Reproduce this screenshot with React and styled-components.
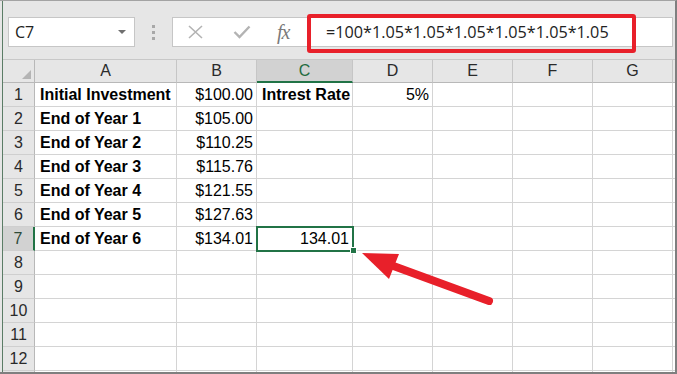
import React from 'react';
import styled, { createGlobalStyle } from 'styled-components';

const GREEN = '#217346';
const RED = '#e8202a';

const COLUMNS = [
  { key: 'A', width: 142 },
  { key: 'B', width: 80 },
  { key: 'C', width: 96 },
  { key: 'D', width: 80 },
  { key: 'E', width: 80 },
  { key: 'F', width: 80 },
  { key: 'G', width: 80 },
];

const DATA = {
  1: { A: 'Initial Investment', B: '$100.00', C: 'Intrest Rate', D: '5%' },
  2: { A: 'End of Year 1', B: '$105.00' },
  3: { A: 'End of Year 2', B: '$110.25' },
  4: { A: 'End of Year 3', B: '$115.76' },
  5: { A: 'End of Year 4', B: '$121.55' },
  6: { A: 'End of Year 5', B: '$127.63' },
  7: { A: 'End of Year 6', B: '$134.01', C: '134.01' },
};

const BOLD_CELLS = ['A', 'C1'];
const ACTIVE_COL = 'C';
const ACTIVE_ROW = 7;
const VISIBLE_ROWS = 12;

const GlobalStyle = createGlobalStyle`
  html, body {
    margin: 0;
    padding: 0;
    background: #ffffff;
  }
  body {
    font-family: "Liberation Sans", Arial, sans-serif;
  }
`;

const Frame = styled.div`
  position: relative;
  width: 677px;
  height: 374px;
  box-sizing: border-box;
  overflow: hidden;
  background: #e6e6e6;
  border-top: 1px solid #a3a3a3;
  border-right: 2px solid #7f7f7f;
  border-bottom: 2px solid #7f7f7f;
  padding-left: 2px;
`;

const Inner = styled.div`
  height: 100%;
  border-left: 1px solid #5b7d66;
  display: flex;
  flex-direction: column;
`;

const Toolbar = styled.div`
  height: 58px;
  flex-shrink: 0;
  box-sizing: border-box;
  display: flex;
  align-items: flex-start;
  padding: 16px 2px 0 5px;
  background: #e6e6e6;
`;

const NameBox = styled.div`
  width: 127px;
  height: 30px;
  box-sizing: border-box;
  background: #fff;
  border: 1px solid #c6c6c6;
  display: flex;
  align-items: center;
  justify-content: space-between;
  padding: 0 8px 0 6px;
  font-family: "Open Sans", sans-serif;
  font-size: 16px;
  color: #222;
`;

const DropArrow = styled.span`
  width: 0;
  height: 0;
  border-left: 4px solid transparent;
  border-right: 4px solid transparent;
  border-top: 4px solid #6f6f6f;
`;

const Grip = styled.div`
  width: 37px;
  height: 30px;
  display: flex;
  flex-direction: column;
  align-items: center;
  justify-content: center;
  gap: 3px;
`;

const GripDot = styled.span`
  width: 3px;
  height: 3px;
  background: #a8a8a8;
`;

const FormulaBar = styled.div`
  position: relative;
  flex: 1;
  height: 30px;
  box-sizing: border-box;
  background: #fff;
  border: 1px solid #c6c6c6;
  display: flex;
  align-items: center;
`;

const ButtonGroup = styled.div`
  width: 134px;
  display: flex;
  align-items: center;
  padding-left: 14px;
  gap: 29px;
  box-sizing: border-box;
`;

const FxLabel = styled.span`
  font-family: "Liberation Serif", "DejaVu Serif", serif;
  font-style: italic;
  font-size: 20px;
  color: #7a7a7a;
  letter-spacing: -1px;
  margin-left: -3px;
`;

const FormulaText = styled.div`
  flex: 1;
  padding-left: 19px;
  font-family: "Open Sans", sans-serif;
  font-size: 16.2px;
  color: #222;
  white-space: nowrap;
`;

const Highlight = styled.div`
  position: absolute;
  left: 134px;
  top: -4px;
  width: 329px;
  height: 39px;
  box-sizing: border-box;
  border: 4px solid ${RED};
  border-radius: 3px;
  pointer-events: none;
`;

const Sheet = styled.div`
  flex: 1;
  display: grid;
  grid-template-columns: 32px ${COLUMNS.map((c) => `${c.width}px`).join(' ')} 1fr;
  grid-template-rows: 23px;
  grid-auto-rows: 24px;
  background: #fff;
  border-top: 1px solid #c8c8c8;
`;

const Corner = styled.div`
  position: relative;
  background: #e6e6e6;
  border-right: 1px solid #b8b8b8;
  border-bottom: 1px solid #b8b8b8;

  &::after {
    content: '';
    position: absolute;
    right: 3px;
    bottom: 3px;
    border-left: 9px solid transparent;
    border-bottom: 9px solid #b4b4b4;
  }
`;

const ColHeader = styled.div`
  background: ${(p) => (p.$active ? '#d2d2d2' : '#e6e6e6')};
  color: ${(p) => (p.$active ? '#1f6b40' : '#2a2a2a')};
  border-right: 1px solid #c6c6c6;
  border-bottom: ${(p) => (p.$active ? `2px solid ${GREEN}` : '1px solid #b8b8b8')};
  display: flex;
  align-items: center;
  justify-content: center;
  font-size: 16px;
`;

const RowHeader = styled.div`
  background: ${(p) => (p.$active ? '#d2d2d2' : '#e6e6e6')};
  color: ${(p) => (p.$active ? '#2e4a38' : '#2a2a2a')};
  border-right: ${(p) => (p.$active ? `2px solid ${GREEN}` : '1px solid #b8b8b8')};
  border-bottom: 1px solid #cfcfcf;
  display: flex;
  align-items: center;
  justify-content: center;
  font-size: 16px;
`;

const Cell = styled.div`
  position: ${(p) => (p.$selected ? 'relative' : 'static')};
  border-right: 1px solid #d4d4d4;
  border-bottom: 1px solid #d4d4d4;
  display: flex;
  align-items: flex-end;
  justify-content: ${(p) => (p.$right ? 'flex-end' : 'flex-start')};
  padding: 0 3px 2px 5px;
  font-size: 16px;
  font-weight: ${(p) => (p.$bold ? 700 : 400)};
  color: #000;
  white-space: nowrap;

  ${(p) =>
    p.$selected &&
    `
    &::after {
      content: '';
      position: absolute;
      left: -1px;
      top: -1px;
      right: -2px;
      bottom: -2px;
      border: 2px solid ${GREEN};
    }
  `}
`;

const FillHandle = styled.span`
  position: absolute;
  right: -5px;
  bottom: -4px;
  width: 5px;
  height: 5px;
  background: ${GREEN};
  border: 1px solid #fff;
  z-index: 2;
`;

const Annotation = styled.svg`
  position: absolute;
  left: 0;
  top: -1px;
  pointer-events: none;
`;

const CloseIcon = () => (
  <svg width="17" height="14" viewBox="0 0 17 14">
    <path d="M2 1 L15 13 M15 1 L2 13" stroke="#b3b3b3" strokeWidth="1.6" fill="none" />
  </svg>
);

const CheckIcon = () => (
  <svg width="18" height="14" viewBox="0 0 18 14">
    <path d="M1.5 7 L6.5 12 L16.5 1.5" stroke="#b3b3b3" strokeWidth="2.4" fill="none" />
  </svg>
);

const isBold = (col, row) => BOLD_CELLS.includes(col) || BOLD_CELLS.includes(`${col}${row}`);

export default function App() {
  // one extra row so the grid runs on under the bottom edge, as in the sheet
  const rows = Array.from({ length: VISIBLE_ROWS + 1 }, (_, i) => i + 1);

  return (
    <Frame>
      <GlobalStyle />
      <Inner>
        <Toolbar>
          <NameBox>
            C7
            <DropArrow />
          </NameBox>
          <Grip>
            <GripDot />
            <GripDot />
            <GripDot />
          </Grip>
          <FormulaBar>
            <ButtonGroup>
              <CloseIcon />
              <CheckIcon />
              <FxLabel>fx</FxLabel>
            </ButtonGroup>
            <FormulaText>=100*1.05*1.05*1.05*1.05*1.05*1.05</FormulaText>
            <Highlight />
          </FormulaBar>
        </Toolbar>

        <Sheet>
          <Corner />
          {COLUMNS.map((c) => (
            <ColHeader key={c.key} $active={c.key === ACTIVE_COL}>
              {c.key}
            </ColHeader>
          ))}
          <ColHeader />

          {rows.map((row) => (
            <React.Fragment key={row}>
              <RowHeader $active={row === ACTIVE_ROW}>{row <= VISIBLE_ROWS ? row : ''}</RowHeader>
              {COLUMNS.map((c) => {
                const value = DATA[row] && DATA[row][c.key];
                const bold = isBold(c.key, row);
                const selected = c.key === ACTIVE_COL && row === ACTIVE_ROW;
                return (
                  <Cell key={c.key} $bold={bold} $right={!bold} $selected={selected}>
                    {value}
                    {selected && <FillHandle />}
                  </Cell>
                );
              })}
              <Cell />
            </React.Fragment>
          ))}
        </Sheet>
      </Inner>

      <Annotation width="677" height="374" viewBox="0 0 677 374">
        <line x1="388" y1="264" x2="489" y2="301" stroke={RED} strokeWidth="8" strokeLinecap="round" />
        <polygon points="362,253 399,254 389,279" fill={RED} />
      </Annotation>
    </Frame>
  );
}
